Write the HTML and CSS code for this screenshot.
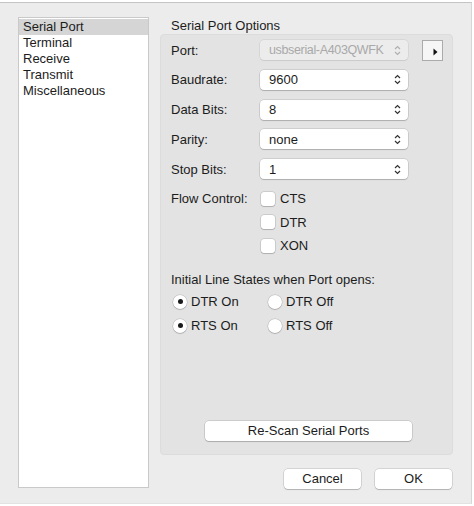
FILE: index.html
```html
<!DOCTYPE html>
<html>
<head>
<meta charset="utf-8">
<link rel="stylesheet" href="styles.css">
</head>
<body>
<div class="window">
  <div class="main">
    <ul class="list">
      <li class="sel">Serial Port</li>
      <li>Terminal</li>
      <li>Receive</li>
      <li>Transmit</li>
      <li>Miscellaneous</li>
    </ul>
    <div class="right">
      <div class="title">Serial Port Options</div>
      <div class="group">
        <div class="row">
          <span class="label">Port:</span>
          <div class="popup disabled"><span class="val">usbserial-A403QWFK</span><svg class="arrows" width="7" height="11" viewBox="0 0 7 11"><path d="M1 4 L3.5 1.5 L6 4 M1 7 L3.5 9.5 L6 7" fill="none" stroke="currentColor" stroke-width="1.2"/></svg></div>
          <div class="tribtn"><svg width="5" height="8" viewBox="0 0 5 8"><path d="M0.5 0.5 L4.5 4 L0.5 7.5 Z" fill="#111"/></svg></div>
        </div>
        <div class="row">
          <span class="label">Baudrate:</span>
          <div class="popup"><span class="val">9600</span><svg class="arrows" width="7" height="11" viewBox="0 0 7 11"><path d="M1 4 L3.5 1.5 L6 4 M1 7 L3.5 9.5 L6 7" fill="none" stroke="currentColor" stroke-width="1.2"/></svg></div>
        </div>
        <div class="row">
          <span class="label">Data Bits:</span>
          <div class="popup"><span class="val">8</span><svg class="arrows" width="7" height="11" viewBox="0 0 7 11"><path d="M1 4 L3.5 1.5 L6 4 M1 7 L3.5 9.5 L6 7" fill="none" stroke="currentColor" stroke-width="1.2"/></svg></div>
        </div>
        <div class="row">
          <span class="label">Parity:</span>
          <div class="popup"><span class="val">none</span><svg class="arrows" width="7" height="11" viewBox="0 0 7 11"><path d="M1 4 L3.5 1.5 L6 4 M1 7 L3.5 9.5 L6 7" fill="none" stroke="currentColor" stroke-width="1.2"/></svg></div>
        </div>
        <div class="row">
          <span class="label">Stop Bits:</span>
          <div class="popup"><span class="val">1</span><svg class="arrows" width="7" height="11" viewBox="0 0 7 11"><path d="M1 4 L3.5 1.5 L6 4 M1 7 L3.5 9.5 L6 7" fill="none" stroke="currentColor" stroke-width="1.2"/></svg></div>
        </div>
        <div class="flow">
          <span class="label">Flow Control:</span>
          <div class="checks">
            <label class="check"><span class="box"></span>CTS</label>
            <label class="check"><span class="box"></span>DTR</label>
            <label class="check"><span class="box"></span>XON</label>
          </div>
        </div>
        <div class="subtitle">Initial Line States when Port opens:</div>
        <div class="radios">
          <label class="radio"><span class="dot on"></span>DTR On</label>
          <label class="radio"><span class="dot"></span>DTR Off</label>
          <label class="radio"><span class="dot on"></span>RTS On</label>
          <label class="radio"><span class="dot"></span>RTS Off</label>
        </div>
        <div class="rescan-wrap"><button class="btn rescan">Re-Scan Serial Ports</button></div>
      </div>
      <div class="buttons">
        <button class="btn dlg">Cancel</button>
        <button class="btn dlg">OK</button>
      </div>
    </div>
  </div>
</div>
</body>
</html>
```

FILE: styles.css
```css
* { box-sizing: border-box; }
html, body { margin: 0; padding: 0; background: #ffffff; }
body {
  font-family: "Liberation Sans", Arial, sans-serif;
  font-size: 13px;
  color: #1c1c1c;
  width: 474px;
  height: 506px;
  overflow: hidden;
}
.window {
  margin-top: 2px;
  width: 472px;
  height: 502px;
  background: #ececec;
  border-top: 1px solid #c4c4c4;
  border-right: 1px solid #d6d6d6;
  border-bottom: 1px solid #e2e2e2;
}
.main {
  display: flex;
  padding: 14px 0 0 18px;
}
.list {
  list-style: none;
  margin: 0;
  padding: 1px 0 0 0;
  width: 131px;
  height: 471px;
  background: #fff;
  border: 1px solid #c9c9c9;
}
.list li {
  height: 16px;
  line-height: 16px;
  padding-left: 4px;
}
.list li.sel { background: #d5d5d5; }
.right {
  margin-left: 11px;
  width: 293px;
  display: flex;
  flex-direction: column;
}
.title {
  height: 16px;
  line-height: 16px;
  padding-left: 11px;
  margin-top: 1px;
}
.group {
  height: 421px;
  background: #e3e3e3;
  border: 1px solid #dcdcdc;
  border-radius: 4px;
  padding: 5px 0 12px 10px;
  display: flex;
  flex-direction: column;
}
.row {
  display: flex;
  align-items: center;
  height: 20px;
  margin-bottom: 9.75px;
}
.label {
  width: 89px;
  flex: none;
}
.popup {
  width: 148px;
  height: 20px;
  background: #fff;
  border-radius: 4px;
  box-shadow: 0 0 0 0.5px rgba(0,0,0,0.18), 0 1px 1px rgba(0,0,0,0.16);
  display: flex;
  align-items: center;
  justify-content: space-between;
  padding: 0 7px 0 9px;
  color: #1c1c1c;
}
.popup .val {
  white-space: nowrap;
  overflow: hidden;
}
.popup .arrows { color: #333; flex: none; }
.popup.disabled {
  background: #ececec;
  color: #a9a9a9;
  box-shadow: 0 0 0 0.5px rgba(0,0,0,0.1), 0 1px 1px rgba(0,0,0,0.06);
}
.popup.disabled .val { font-size: 12.5px; letter-spacing: -0.35px; }
.popup.disabled .arrows { color: #b0b0b0; }
.tribtn {
  margin-left: 14px;
  width: 21px;
  height: 21px;
  background: #f6f6f6;
  border: 1px solid #ababab;
  display: flex;
  align-items: center;
  justify-content: center;
  padding-left: 5px;
  padding-top: 3px;
}
.flow {
  display: flex;
  align-items: flex-start;
}
.flow .label { line-height: 20px; }
.checks {
  display: flex;
  flex-direction: column;
  gap: 3.5px;
}
.check {
  display: flex;
  align-items: center;
  height: 20px;
}
.box {
  width: 14px;
  height: 14px;
  background: #fff;
  border-radius: 3px;
  box-shadow: 0 0 0 0.5px rgba(0,0,0,0.2), 0 1px 1px rgba(0,0,0,0.14);
  margin: 0 5px 0 1px;
}
.subtitle {
  margin-top: 16px;
  height: 16px;
  line-height: 16px;
}
.radios {
  display: grid;
  grid-template-columns: 95px auto;
  grid-auto-rows: 24px;
  margin-top: 2px;
  padding-left: 2px;
}
.radio {
  display: flex;
  align-items: center;
}
.dot {
  width: 14px;
  height: 14px;
  border-radius: 50%;
  background: #fff;
  box-shadow: 0 0 0 0.5px rgba(0,0,0,0.2), 0 1px 1px rgba(0,0,0,0.14);
  margin-right: 4px;
  display: flex;
  align-items: center;
  justify-content: center;
}
.dot.on::after {
  content: "";
  width: 5px;
  height: 5px;
  border-radius: 50%;
  background: #1a1a1a;
}
.rescan-wrap {
  margin-top: auto;
  padding-left: 34px;
}
.btn {
  font-family: "Liberation Sans", Arial, sans-serif;
  font-size: 13px;
  color: #1c1c1c;
  background: #fff;
  border: none;
  border-radius: 4px;
  box-shadow: 0 0 0 0.5px rgba(0,0,0,0.2), 0 1px 1px rgba(0,0,0,0.16);
  padding: 0;
  height: 20px;
  line-height: 20px;
}
.rescan { width: 207px; display: block; margin-bottom: 1px; }
.buttons {
  display: flex;
  justify-content: flex-end;
  gap: 14px;
  margin-top: 14px;
  padding-right: 1px;
}
.dlg { width: 77px; }
```
